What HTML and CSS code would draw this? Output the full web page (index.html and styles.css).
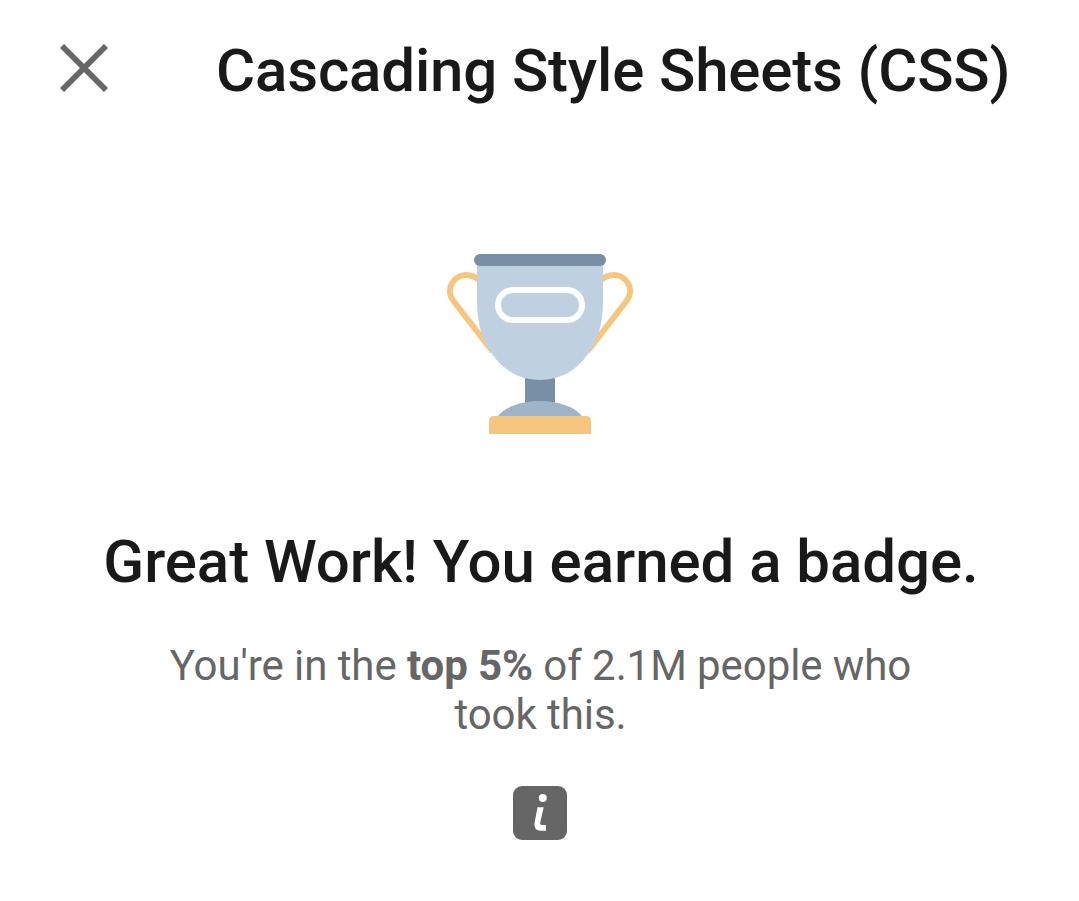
FILE: index.html
```html
<!DOCTYPE html>
<html lang="en">
<head>
  <meta charset="UTF-8">
  <meta name="viewport" content="width=device-width, initial-scale=1.0">
  <title>Cascading Style Sheets (CSS)</title>
  <link rel="stylesheet" href="styles.css">
</head>
<body>
  <header class="header">
    <button type="button" class="close-button" aria-label="Close">
      <svg width="48" height="48" viewBox="0 0 48 48">
        <path d="M2 2L46 46M46 2L2 46" fill="none" stroke="#666666" stroke-width="5.8" />
      </svg>
    </button>
    <h1>Cascading Style Sheets (CSS)</h1>
  </header>

  <main class="result">
    <svg class="trophy" width="188" height="182" viewBox="0 0 188 182">
      <!-- handles -->
      <path d="M46.5 99.5L7.5 49A16 16 0 0 1 20 23C26 23 30 25 34 29M141.5 99.5L180.5 49A16 16 0 0 0 168 23C162 23 158 25 154 29" fill="none" stroke="#f5c77e" stroke-width="6" />
      <!-- stem and foot -->
      <rect x="79" y="120" width="30" height="34" fill="#788fa5" />
      <path d="M51 165C60 154 76 149 94 149C112 149 128 154 137 165Z" fill="#a0b4c8" />
      <path d="M43 182V169Q43 164 48 164H140Q145 164 145 169V182Z" fill="#f5c77e" />
      <!-- cup -->
      <path d="M31 10H157V48C157 72 152 88 142 102C130 119 114 128 94 128C74 128 58 119 46 102C36 88 31 72 31 48Z" fill="#bfd0e1" />
      <rect x="28" y="2" width="132" height="12" rx="6" fill="#788fa5" />
      <rect x="52" y="38" width="84" height="30" rx="15" fill="none" stroke="#ffffff" stroke-width="6" />
    </svg>

    <h2>Great Work! You earned a badge.</h2>
    <p>You're in the <strong>top 5%</strong> of 2.1M people who took this.</p>

    <button type="button" class="info-button" aria-label="More information">
      <svg width="54" height="54" viewBox="0 0 54 54">
        <rect width="54" height="54" rx="9" fill="#666666" />
        <circle cx="29.8" cy="12" r="4" fill="#ffffff" />
        <path d="M24.5 21.3H30.7L27.2 36.5Q26.8 39 29 39H33V44.7H28Q20.5 44.7 21.5 37Z" fill="#ffffff" />
      </svg>
    </button>
  </main>
</body>
</html>
```
FILE: styles.css
```css
* {
  box-sizing: border-box;
  margin: 0;
  padding: 0;
}

body {
  font-family: Roboto, sans-serif;
  background-color: #ffffff;
  color: #191919;
}

button {
  border: none;
  background: none;
  cursor: pointer;
}

svg {
  display: block;
}

.header {
  display: flex;
  align-items: center;
  height: 136px;
  padding-left: 60px;
}

.header h1 {
  margin-left: 108px;
  padding-top: 5px;
  font-size: 60px;
  font-weight: 500;
  line-height: 72px;
  letter-spacing: -0.16px;
  white-space: nowrap;
}

.result {
  display: flex;
  flex-direction: column;
  align-items: center;
  padding-top: 116px;
  padding-left: 1px;
  text-align: center;
}

.result h2 {
  margin-top: 92px;
  padding-left: 2px;
  font-size: 60px;
  font-weight: 500;
  line-height: 72px;
  letter-spacing: -0.06px;
  white-space: nowrap;
}

.result p {
  width: 790px;
  margin-top: 43px;
  padding-left: 1px;
  color: #666666;
  font-size: 42px;
  line-height: 49px;
  letter-spacing: -0.08px;
}

.info-button {
  margin-top: 47px;
}
```
